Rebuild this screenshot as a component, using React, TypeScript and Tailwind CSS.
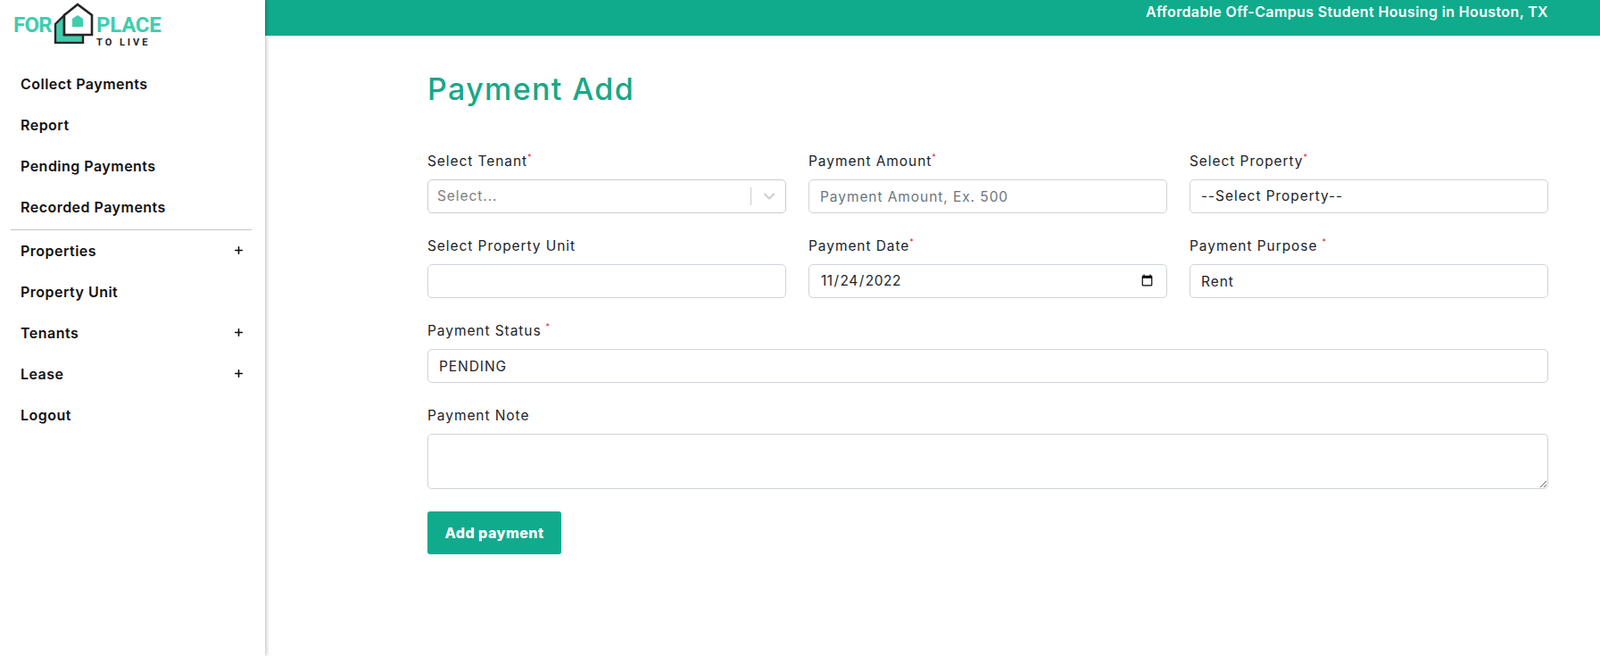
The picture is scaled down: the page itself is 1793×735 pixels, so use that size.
import { ReactNode } from 'react'
import { Plus, ChevronDown } from 'lucide-react'

const inputClass =
  'h-[38px] w-full rounded-[5px] border border-[#ced4da] bg-white px-[12px] text-[15.5px] tracking-[0.06em] text-[#212529] outline-none placeholder:text-[#6c757d]'

const menu = [
  { name: 'Collect Payments' },
  { name: 'Report' },
  { name: 'Pending Payments' },
  { name: 'Recorded Payments', divider: true },
  { name: 'Properties', more: true },
  { name: 'Property Unit' },
  { name: 'Tenants', more: true },
  { name: 'Lease', more: true },
  { name: 'Logout' },
]

function Logo() {
  return (
    <div className="flex h-[70.5px] items-start pl-[15px] pt-[3px] font-['Roboto',sans-serif] font-bold leading-none">
      <span className="mt-[13px] w-[45px] text-[24px] tracking-[-0.03em] text-[#3fcdae]">FOR</span>
      <svg width="46" height="46" viewBox="0 0 46 46" className="shrink-0">
        <path d="M12 14 L2 24 V45 H33 V36 H12 Z" fill="#3fcdae" stroke="#262626" strokeWidth="2.4" />
        <path d="M12 14 L27 2 L43 14 V36 H12 Z" fill="#fff" stroke="#262626" strokeWidth="2.6" />
        <path d="M27 14 L33 18 V27 H21 V18 Z" fill="#3fcdae" />
      </svg>
      <div className="ml-[2px]">
        <div className="mt-[13px] text-[24px] tracking-[-0.01em] text-[#3fcdae]">PLACE</div>
        <div className="mt-[2px] text-[11px] tracking-[0.27em] text-[#262626]">TO LIVE</div>
      </div>
    </div>
  )
}

function Sidebar() {
  return (
    <aside className="z-10 h-full w-[297px] shrink-0 bg-white shadow-[2px_0_4px_rgba(0,0,0,0.2)]">
      <Logo />
      <nav className="px-[12px]">
        {menu.map((item) => (
          <div key={item.name}>
            <div className="flex h-[46px] items-center justify-between pl-[11px] pr-[11px] text-[16px] font-semibold tracking-[0.03em] text-[#111]">
              {item.name}
              {item.more && <Plus size={13} strokeWidth={3} />}
            </div>
            {item.divider && <div className="mr-[3px] mt-[2px] border-t border-[#c4c4c4]" />}
          </div>
        ))}
      </nav>
    </aside>
  )
}

function Field({
  label,
  required,
  gap,
  children,
  className,
}: {
  label: string
  required?: boolean
  gap?: boolean
  children: ReactNode
  className?: string
}) {
  return (
    <div className={className}>
      <label className="mb-[9px] block h-6 text-[15.5px] leading-[26px] tracking-[0.06em] text-[#212529]">
        {label}
        {required && (
          <span className={`relative -top-[7px] text-[9px] text-[#e11d2e] ${gap ? 'ml-[5px]' : ''}`}>*</span>
        )}
      </label>
      {children}
    </div>
  )
}

export default function App() {
  return (
    <div className="flex h-screen overflow-hidden bg-white font-['Inter',sans-serif]">
      <Sidebar />
      <div className="min-w-0 flex-1">
        <header className="flex h-10 justify-end bg-[#10ab8d] pr-[58px] text-[16px] font-semibold leading-[27px] tracking-[0.023em] text-white">
          Affordable Off-Campus Student Housing in Houston, TX
        </header>
        <main className="pl-[182px] pr-[58px]">
          <h1 className="mt-[40px] h-[40px] text-[34px] font-medium leading-[40px] tracking-[0.04em] text-[#18a888]">
            Payment Add
          </h1>
          <form className="mt-[48px] grid grid-cols-3 gap-x-[25px] gap-y-6">
            <Field label="Select Tenant" required>
              <div className="flex h-[38px] items-center justify-between rounded-[5px] border border-[#ccc] pl-[10px] pr-[8px] text-[15.5px] tracking-[0.06em] text-[#808080]">
                Select...
                <div className="flex items-center">
                  <span className="mr-[10px] h-[20px] w-px bg-[#ccc]" />
                  <ChevronDown size={20} strokeWidth={2.5} className="text-[#ccc]" />
                </div>
              </div>
            </Field>
            <Field label="Payment Amount" required>
              <input className={inputClass} placeholder="Payment Amount, Ex. 500" />
            </Field>
            <Field label="Select Property" required>
              <select className={`${inputClass} appearance-none`} defaultValue="">
                <option value="">--Select Property--</option>
              </select>
            </Field>
            <Field label="Select Property Unit">
              <select className={`${inputClass} appearance-none`} />
            </Field>
            <Field label="Payment Date" required>
              <input type="date" className={`${inputClass} !tracking-[0.03em]`} defaultValue="2022-11-24" />
            </Field>
            <Field label="Payment Purpose" required gap>
              <input className={inputClass} defaultValue="Rent" />
            </Field>
            <Field label="Payment Status" required gap className="col-span-3">
              <input className={inputClass} defaultValue="PENDING" />
            </Field>
            <Field label="Payment Note" className="col-span-3">
              <textarea className="block h-[62px] w-full rounded-[5px] border border-[#ced4da] px-[12px] py-[6px] text-[15px] outline-none" />
            </Field>
            <div className="col-span-3 mt-[1px]">
              <button
                type="button"
                className="h-[48px] w-[150px] rounded-[3px] bg-[#10ab8d] text-[16px] font-extrabold tracking-[0.03em] text-white"
              >
                Add payment
              </button>
            </div>
          </form>
        </main>
      </div>
    </div>
  )
}
